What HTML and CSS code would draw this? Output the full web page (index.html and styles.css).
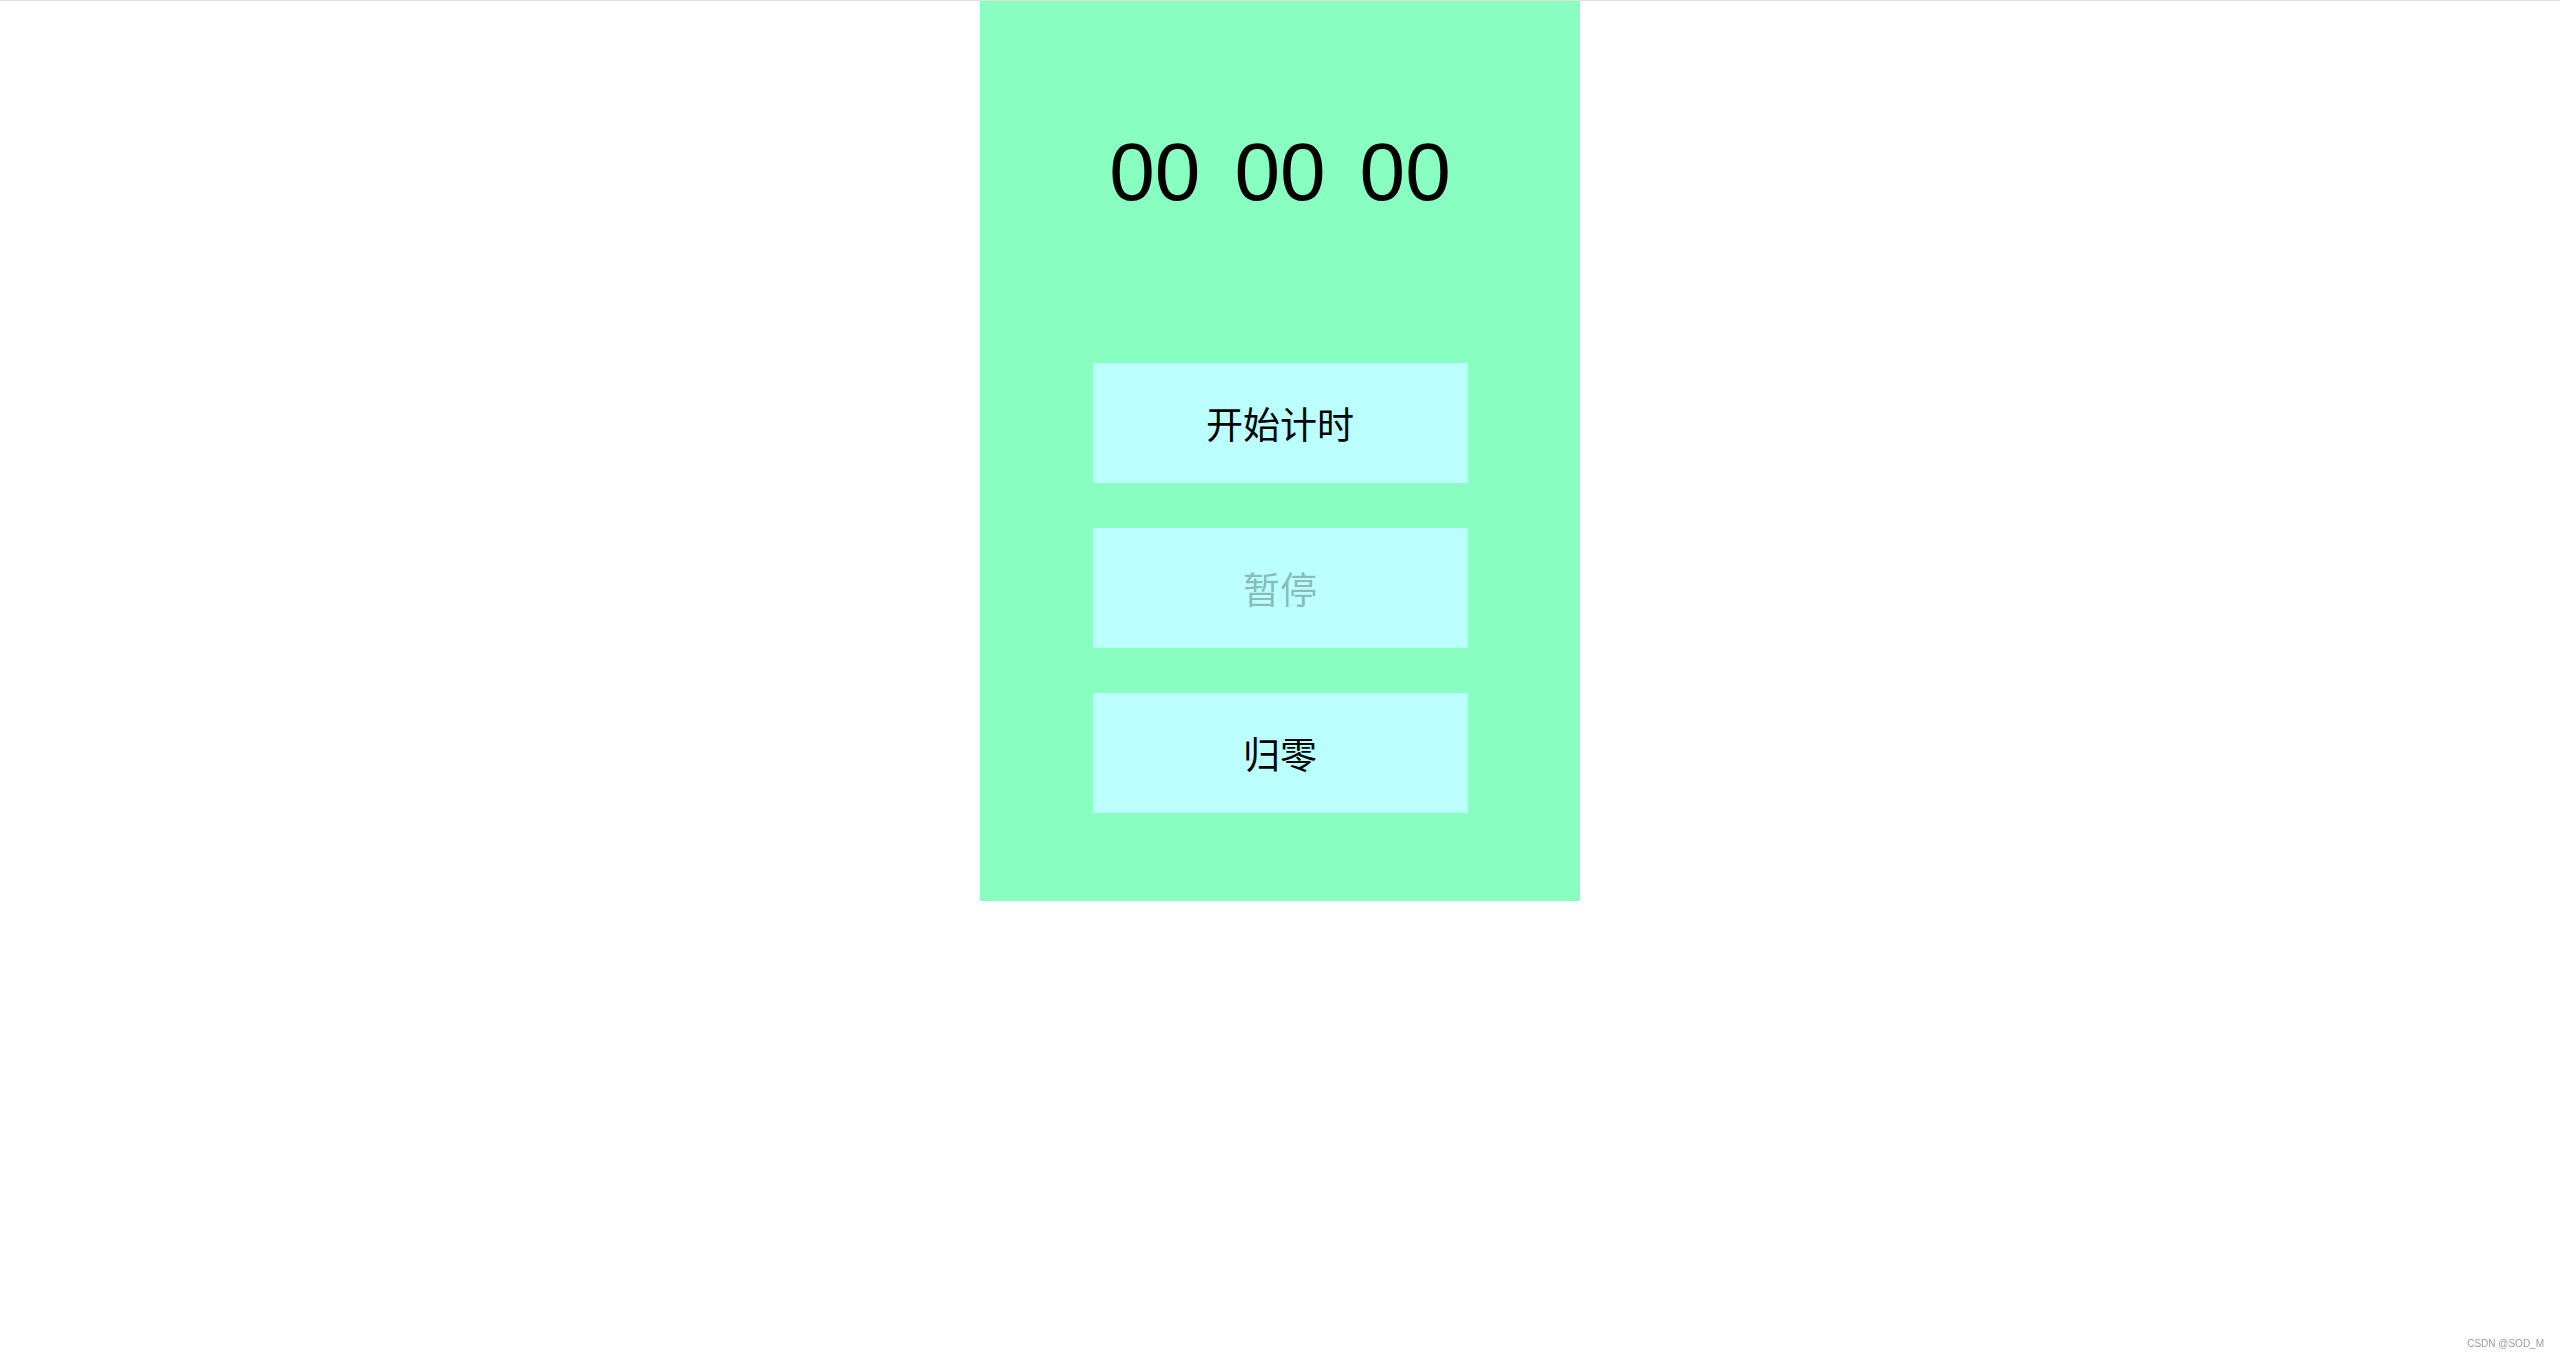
FILE: index.html
```html
<!DOCTYPE html>
<html lang="zh-CN">
<head>
<meta charset="utf-8">
<title>计时器</title>
<link rel="stylesheet" href="styles.css">
<script>
  //Timer state
  var seconds = 0;
  var timer = null;

  function pad(n) {
    return n < 10 ? "0" + n : "" + n;
  }
  function show() {
    document.getElementById("hour").innerHTML = pad(Math.floor(seconds / 3600));
    document.getElementById("minute").innerHTML = pad(Math.floor(seconds / 60) % 60);
    document.getElementById("second").innerHTML = pad(seconds % 60);
  }

  window.onload = function() {
    var start = document.getElementById("start");
    var pause = document.getElementById("pause");
    var reset = document.getElementById("reset");

    start.addEventListener("click", function() {
      timer = setInterval(function() {
        seconds++;
        show();
      }, 1000);
      start.disabled = true;
      pause.disabled = false;
    }, false);
    pause.addEventListener("click", function() {
      clearInterval(timer);
      start.disabled = false;
      pause.disabled = true;
    }, false);
    reset.addEventListener("click", function() {
      clearInterval(timer);
      seconds = 0;
      show();
      start.disabled = false;
      pause.disabled = true;
    }, false);
  }
</script>
</head>
<body>
<div class="box">
  <div class="clock">
    <span id="hour">00</span>
    <span id="minute">00</span>
    <span id="second">00</span>
  </div>
  <div class="buttons">
    <button type="button" class="btn" id="start">开始计时</button>
    <button type="button" class="btn" id="pause" disabled>暂停</button>
    <button type="button" class="btn" id="reset">归零</button>
  </div>
</div>
<div class="mark">CSDN @SOD_M</div>
</body>
</html>
```

FILE: styles.css
```css
  body {
    margin: 0;
    border-top: 1px solid #dddddd;
    background-color: #ffffff;
    font-family: "Noto Sans CJK SC", sans-serif;
  }
  .box {
    width: 600px;
    height: 900px;
    margin: 0 auto;
    background-color: #88ffc0;
    box-sizing: border-box;
    padding-top: 121px;
  }
  .clock {
    display: flex;
    justify-content: center;
    gap: 34px;
    height: 241px;
    font-family: "Liberation Sans", Arial, sans-serif;
    font-size: 82px;
    line-height: 100px;
    color: #000000;
  }
  .buttons {
    display: flex;
    flex-direction: column;
    align-items: center;
    gap: 45px;
  }
  .btn {
    width: 375px;
    height: 120px;
    border: none;
    background-color: #bbffff;
    font-family: "Noto Sans CJK SC", sans-serif;
    font-size: 37px;
    color: #000000;
    padding: 0;
  }
  .btn:disabled {
    color: rgba(16, 16, 16, 0.3);
  }
  .mark {
    position: fixed;
    right: 16px;
    bottom: 10px;
    font-family: "Liberation Sans", sans-serif;
    font-size: 10px;
    color: #999999;
  }
```
